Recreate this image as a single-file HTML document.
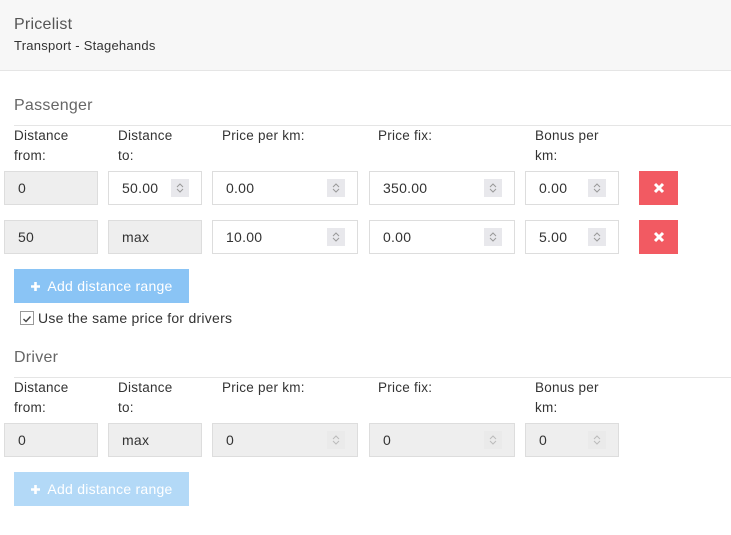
<!DOCTYPE html>
<html><head><style>
*{box-sizing:border-box;margin:0;padding:0}
body{width:731px;height:535px;background:#fff;font-family:"Liberation Sans",sans-serif;color:#333;position:relative;overflow:hidden;letter-spacing:0.25px}
.a{position:absolute}
.hdr{left:0;top:0;width:731px;height:71px;background:#f7f7f7;border-bottom:1px solid #e5e5e5}
.t1{font-size:16px;color:#555;left:14px;top:16px}
.t2{font-size:13px;color:#333;left:14px;top:38px}
.sec{font-size:16px;color:#666;left:14px}
.line{left:14px;width:717px;height:1px;background:#e5e5e5}
.lbl{font-size:13.5px;line-height:20px;color:#333}
.in{height:34px;border:1px solid #ddd;background:#fff;font-size:14px;line-height:32px;padding-left:13px}
.in.g{background:#eee}
.sp{position:absolute;right:12px;top:7px;width:18px;height:18px;background:#e8e8ec}
.g .sp{background:#eaeaea}
.sp svg{display:block}
.del{width:39px;height:34px;background:#f25a62;color:#fff;display:flex;align-items:center;justify-content:center}
.btn{width:175px;height:34px;color:#fff;font-size:14px;display:flex;align-items:center;justify-content:center;gap:6px}
</style></head><body>
<div class="a hdr"></div>
<div class="a t1">Pricelist</div>
<div class="a t2">Transport - Stagehands</div>

<div class="a sec" style="top:97px">Passenger</div>
<div class="a line" style="top:125px"></div>
<div class="a lbl" style="left:14px;top:126px">Distance<br>from:</div>
<div class="a lbl" style="left:118px;top:126px">Distance<br>to:</div>
<div class="a lbl" style="left:222px;top:126px">Price per km:</div>
<div class="a lbl" style="left:378px;top:126px">Price fix:</div>
<div class="a lbl" style="left:535px;top:126px">Bonus per<br>km:</div>

<div class="a in g" style="left:4px;top:171px;width:94px">0</div>
<div class="a in" style="left:108px;top:171px;width:94px">50.00<span class="sp"><svg width="18" height="18"><path d="M6 8l3-3 3 3M6 10l3 3 3-3" fill="none" stroke="#999" stroke-width="1"/></svg></span></div>
<div class="a in" style="left:212px;top:171px;width:146px">0.00<span class="sp"><svg width="18" height="18"><path d="M6 8l3-3 3 3M6 10l3 3 3-3" fill="none" stroke="#999" stroke-width="1"/></svg></span></div>
<div class="a in" style="left:369px;top:171px;width:146px">350.00<span class="sp"><svg width="18" height="18"><path d="M6 8l3-3 3 3M6 10l3 3 3-3" fill="none" stroke="#999" stroke-width="1"/></svg></span></div>
<div class="a in" style="left:525px;top:171px;width:94px">0.00<span class="sp"><svg width="18" height="18"><path d="M6 8l3-3 3 3M6 10l3 3 3-3" fill="none" stroke="#999" stroke-width="1"/></svg></span></div>
<div class="a del" style="left:639px;top:171px"><svg width="12" height="12"><path d="M2 2l8 8M10 2l-8 8" stroke="#fff" stroke-width="3"/></svg></div>

<div class="a in g" style="left:4px;top:220px;width:94px">50</div>
<div class="a in g" style="left:108px;top:220px;width:94px">max</div>
<div class="a in" style="left:212px;top:220px;width:146px">10.00<span class="sp"><svg width="18" height="18"><path d="M6 8l3-3 3 3M6 10l3 3 3-3" fill="none" stroke="#999" stroke-width="1"/></svg></span></div>
<div class="a in" style="left:369px;top:220px;width:146px">0.00<span class="sp"><svg width="18" height="18"><path d="M6 8l3-3 3 3M6 10l3 3 3-3" fill="none" stroke="#999" stroke-width="1"/></svg></span></div>
<div class="a in" style="left:525px;top:220px;width:94px">5.00<span class="sp"><svg width="18" height="18"><path d="M6 8l3-3 3 3M6 10l3 3 3-3" fill="none" stroke="#999" stroke-width="1"/></svg></span></div>
<div class="a del" style="left:639px;top:220px"><svg width="12" height="12"><path d="M2 2l8 8M10 2l-8 8" stroke="#fff" stroke-width="3"/></svg></div>

<div class="a btn" style="left:14px;top:269px;background:#8ac4f5"><svg width="11" height="11"><path d="M5.5 1v9M1 5.5h9" stroke="#fff" stroke-width="2.6"/></svg>Add distance range</div>
<div class="a" style="left:20px;top:311px;width:14px;height:14px;border:1px solid #999;background:#fff"><svg width="12" height="12"><path d="M2.5 6l2.5 2.5 4.5-5" fill="none" stroke="#444" stroke-width="1.4"/></svg></div>
<div class="a" style="left:38px;top:310px;font-size:14px;color:#333">Use the same price for drivers</div>

<div class="a sec" style="top:349px">Driver</div>
<div class="a line" style="top:377px"></div>
<div class="a lbl" style="left:14px;top:378px">Distance<br>from:</div>
<div class="a lbl" style="left:118px;top:378px">Distance<br>to:</div>
<div class="a lbl" style="left:222px;top:378px">Price per km:</div>
<div class="a lbl" style="left:378px;top:378px">Price fix:</div>
<div class="a lbl" style="left:535px;top:378px">Bonus per<br>km:</div>

<div class="a in g" style="left:4px;top:423px;width:94px">0</div>
<div class="a in g" style="left:108px;top:423px;width:94px">max</div>
<div class="a in g" style="left:212px;top:423px;width:146px">0<span class="sp"><svg width="18" height="18"><path d="M6 8l3-3 3 3M6 10l3 3 3-3" fill="none" stroke="#bbb" stroke-width="1"/></svg></span></div>
<div class="a in g" style="left:369px;top:423px;width:146px">0<span class="sp"><svg width="18" height="18"><path d="M6 8l3-3 3 3M6 10l3 3 3-3" fill="none" stroke="#bbb" stroke-width="1"/></svg></span></div>
<div class="a in g" style="left:525px;top:423px;width:94px">0<span class="sp"><svg width="18" height="18"><path d="M6 8l3-3 3 3M6 10l3 3 3-3" fill="none" stroke="#bbb" stroke-width="1"/></svg></span></div>

<div class="a btn" style="left:14px;top:472px;background:#b3d9f7"><svg width="11" height="11"><path d="M5.5 1v9M1 5.5h9" stroke="#fff" stroke-width="2.6"/></svg>Add distance range</div>
</body></html>
